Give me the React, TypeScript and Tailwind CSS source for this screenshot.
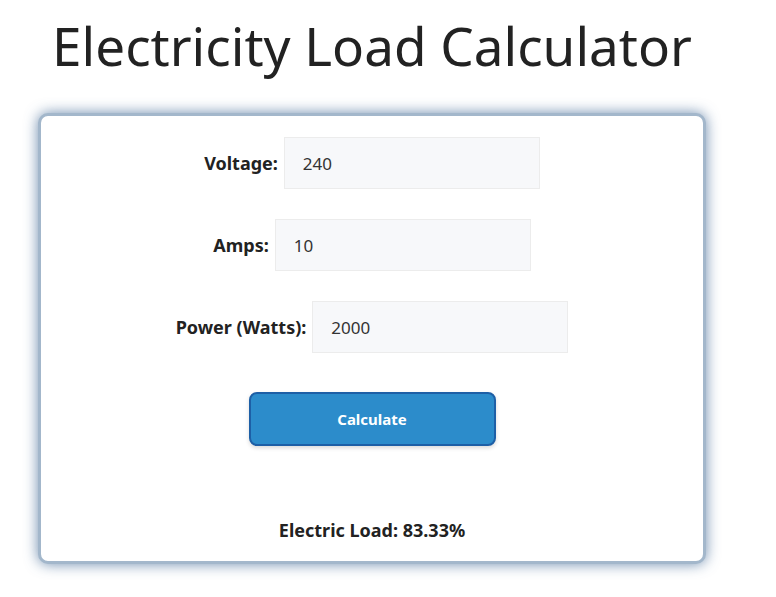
import { useState } from "react"

const Row = ({ label, value, onChange }: { label: string; value: string; onChange: (v: string) => void }) => (
  <div className="flex items-center gap-[6px]">
    <label className="text-[18px] font-bold text-[#222]">{label}</label>
    <input
      type="text"
      value={value}
      onChange={(e) => onChange(e.target.value)}
      className="w-[256px] h-[52px] pl-[18px] bg-[#f7f8fa] border border-[#ececec] text-[17px] text-[#333] outline-none"
    />
  </div>
)

export default function App() {
  const [voltage, setVoltage] = useState("240")
  const [amps, setAmps] = useState("10")
  const [power, setPower] = useState("2000")
  const [load, setLoad] = useState("83.33")

  const calculate = () => {
    const max = Number(voltage) * Number(amps)
    if (!max) return
    setLoad(((Number(power) / max) * 100).toFixed(2))
  }

  return (
    <div className="min-h-screen bg-white font-['Noto_Sans',sans-serif] text-[#222]">
      <div className="ml-[38px] w-[668px] pt-[10px]">
        <h1 className="text-center text-[53px] leading-[72px] font-normal text-[#222] mb-[31px]">
          Electricity Load Calculator
        </h1>

        <div className="h-[451px] rounded-[10px] bg-white border-[3px] border-[#a3b7cb] shadow-[0_0_14px_rgba(60,100,145,0.75)] flex flex-col items-center pt-[21px]">
          <div className="flex flex-col items-center gap-[30px]">
            <Row label="Voltage:" value={voltage} onChange={setVoltage} />
            <Row label="Amps:" value={amps} onChange={setAmps} />
            <Row label="Power (Watts):" value={power} onChange={setPower} />
          </div>

          <button
            onClick={calculate}
            className="mt-[39px] w-[247px] h-[54px] rounded-[8px] bg-[#2c8ccb] border-2 border-[#1d5fa6] text-white text-[15px] font-bold shadow-[0_2px_4px_rgba(0,0,0,0.15)]"
          >
            Calculate
          </button>

          <p className="mt-[71px] text-[18px] font-bold text-[#222]">Electric Load: {load}%</p>
        </div>
      </div>
    </div>
  )
}
